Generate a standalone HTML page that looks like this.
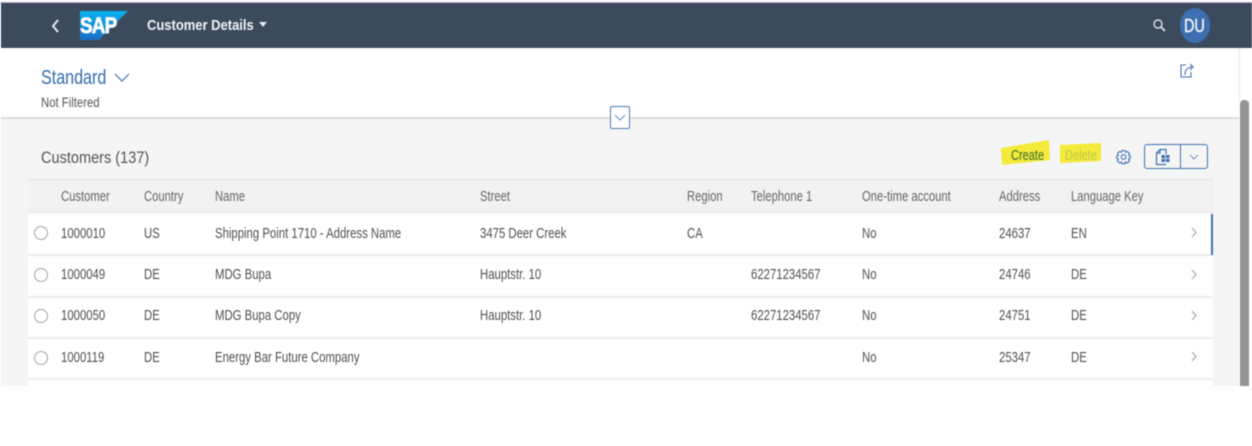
<!DOCTYPE html>
<html>
<head>
<meta charset="utf-8">
<style>
html,body{margin:0;padding:0;background:#fff;}
#p{position:relative;width:1252px;height:446px;overflow:hidden;background:#fff;font-family:"Liberation Sans",sans-serif;color:#4a4a4a;filter:blur(.45px);}
.a{position:absolute;}
.t{position:absolute;white-space:nowrap;font-size:14.5px;line-height:16px;transform:scaleX(.783);transform-origin:0 50%;color:#505050;}
.h{color:#666;transform:scaleX(.775);}
.sep{position:absolute;left:28px;width:1185px;height:2px;background:#ebebeb;}
.r{position:absolute;left:34px;width:12px;height:12px;border:1.3px solid #a3a3a3;border-radius:50%;background:#fff;}
svg{position:absolute;overflow:visible;}
</style>
</head>
<body>
<div id="p">
<div class="a" style="left:0;top:2px;width:1252px;height:1px;background:#b9a3c4"></div>
<div class="a" style="left:1px;top:3px;width:1251px;height:45px;background:#3c4a5e"></div>
<svg style="left:0;top:0" width="100" height="48"><path d="M58 20 L53 26 L58 32" fill="none" stroke="#e6e9ee" stroke-width="2"/>
<defs><linearGradient id="g" x1="0" y1="0" x2="0" y2="1"><stop offset="0" stop-color="#0ab4ef"/><stop offset="1" stop-color="#1a6fc4"/></linearGradient></defs>
<polygon points="80,11 128,11 99,40 80,40" fill="url(#g)"/></svg>
<div class="t" style="left:80px;top:14px;font-size:22px;line-height:24px;font-weight:bold;color:#fff;transform:scaleX(.86);letter-spacing:-1px;-webkit-text-stroke:.7px #fff">SAP</div>
<div class="t" style="left:147px;top:18px;font-size:15px;font-weight:bold;color:#f2f4f6;transform:scaleX(.865)">Customer Details</div>
<svg style="left:0;top:0" width="300" height="48"><polygon points="259,22 267,22 263,27" fill="#e6e9ee"/></svg>
<svg style="left:0;top:0" width="1252" height="48"><circle cx="1158" cy="24" r="4" fill="none" stroke="#dfe3e8" stroke-width="1.4"/><path d="M1161 27 L1165 31" stroke="#dfe3e8" stroke-width="1.8"/></svg>
<div class="a" style="left:1180px;top:8px;width:30px;height:35px;border-radius:50%;background:#3d6fb0"></div>
<div class="t" style="left:1184px;top:16px;font-size:18px;line-height:20px;color:#eef2f7;transform:scaleX(.8);-webkit-text-stroke:.5px #eef2f7">DU</div>

<div class="a" style="left:1239px;top:48px;width:1px;height:52px;background:#e5e5e5"></div>
<div class="t" style="left:41px;top:67px;font-size:20.5px;line-height:22px;color:#346bac;transform:scaleX(.785)">Standard</div>
<svg style="left:0;top:0" width="140" height="90"><path d="M115 74 L122 81 L129 74" fill="none" stroke="#3f72b0" stroke-width="1.2"/></svg>
<div class="t" style="left:41px;top:94px;font-size:14px;color:#555;transform:scaleX(.81)">Not Filtered</div>
<svg style="left:0;top:0" width="1252" height="90"><path d="M1186 65 H1181 V77 H1191 V72" fill="none" stroke="#3f72b0" stroke-width="1.1"/><path d="M1185 75 C1185 69 1188 67 1193 67 M1190 64 L1193 67 L1190 70" fill="none" stroke="#3f72b0" stroke-width="1.1"/></svg>

<div class="a" style="left:1px;top:118px;width:1238px;height:268px;background:#f5f5f5"></div>
<div class="a" style="left:1px;top:117px;width:1238px;height:2px;background:#dcdcdc"></div>
<div class="a" style="left:610px;top:106px;width:18px;height:21px;border:1px solid #4a7ab8;border-radius:2px;background:#fff"></div>
<svg style="left:0;top:0" width="640" height="130"><path d="M615 115 L620 120 L625 115" fill="none" stroke="#7d9dc6" stroke-width="1.2"/></svg>

<div class="a" style="left:1240px;top:100px;width:9px;height:286px;background:#949494;border-radius:4px 4px 0 0"></div>

<div class="t" style="left:41px;top:149px;font-size:17px;line-height:18px;color:#555;transform:scaleX(.855)">Customers (137)</div>

<svg style="left:0;top:0" width="1252" height="180">
<polygon points="1001,148 1049,140 1050,160 1002,165" fill="#f4ea3a"/>
<polygon points="1060,145 1101,143 1101,161 1060,163" fill="#f4ea3a"/>
<g fill="none" stroke="#3f72b0" stroke-width="1.1" stroke-linejoin="round"><circle cx="1123.500" cy="157" r="2.300"/><path d="M1122 150.500 H1125 L1125.500 152.300 L1127.500 151.500 L1129.500 153.500 L1128.500 155.500 L1130.300 156 V158.500 L1128.500 159 L1129.500 161 L1127.500 163 L1125.500 162 L1125 163.800 H1122 L1121.500 162 L1119.500 163 L1117.500 161 L1118.500 159 L1116.700 158.500 V156 L1118.500 155.500 L1117.500 153.500 L1119.500 151.500 L1121.500 152.300 Z"/></g>
<g fill="none" stroke="#3f72b0" stroke-width="1.200"><path d="M1166 154 V149.500 H1160 L1156.500 153 V164.500 H1166"/><path d="M1160 149.500 V153 H1156.500"/></g>
<rect x="1161.500" y="155" width="8" height="7" fill="#3f72b0"/>
<path d="M1161.500 158.500 H1169.500 M1165.500 155 V162" stroke="#f5f5f5" stroke-width=".8"/>
<path d="M1190 155 L1194 159 L1198 155" fill="none" stroke="#6f93c0" stroke-width="1"/>
</svg>
<div class="t" style="left:1011px;top:148px;color:#356a2c;transform:scaleX(.76)">Create</div>
<div class="t" style="left:1065px;top:148px;color:#bcc94a;transform:scaleX(.76)">Delete</div>
<div class="a" style="left:1144px;top:144px;width:62px;height:23px;border:1px solid #3f72b0;border-radius:3px"></div>
<div class="a" style="left:1180px;top:144px;width:1px;height:25px;background:#3f72b0"></div>

<div class="a" style="left:28px;top:179px;width:1185px;height:1px;background:#e2e2e2"></div>
<div class="a" style="left:28px;top:180px;width:1185px;height:32px;background:#f2f2f2"></div>
<div class="a" style="left:28px;top:212px;width:1185px;height:174px;background:#fff"></div>
<div class="sep" style="top:212px;height:1px;background:#e2e2e2"></div>
<div class="sep" style="top:254px"></div>
<div class="sep" style="top:296px"></div>
<div class="sep" style="top:337px"></div>
<div class="sep" style="top:378px"></div>
<div class="a" style="left:1211px;top:214px;width:2px;height:41px;background:#3f72b0"></div>

<div class="t h" style="left:61px;top:189px">Customer</div>
<div class="t h" style="left:144px;top:189px">Country</div>
<div class="t h" style="left:214.500px;top:189px">Name</div>
<div class="t h" style="left:480px;top:189px">Street</div>
<div class="t h" style="left:687px;top:189px">Region</div>
<div class="t h" style="left:751px;top:189px">Telephone 1</div>
<div class="t h" style="left:862px;top:189px">One-time account</div>
<div class="t h" style="left:999px;top:189px">Address</div>
<div class="t h" style="left:1071px;top:189px">Language Key</div>

<div class="r" style="top:226px"></div>
<div class="t" style="left:61px;top:225.500px">1000010</div>
<div class="t" style="left:144px;top:225.500px">US</div>
<div class="t" style="left:214.500px;top:225.500px">Shipping Point 1710 - Address Name</div>
<div class="t" style="left:480px;top:225.500px">3475 Deer Creek</div>
<div class="t" style="left:687px;top:225.500px">CA</div>
<div class="t" style="left:862px;top:225.500px">No</div>
<div class="t" style="left:999px;top:225.500px">24637</div>
<div class="t" style="left:1071px;top:225.500px">EN</div>

<div class="r" style="top:268px"></div>
<div class="t" style="left:61px;top:267px">1000049</div>
<div class="t" style="left:144px;top:267px">DE</div>
<div class="t" style="left:214.500px;top:267px">MDG Bupa</div>
<div class="t" style="left:480px;top:267px">Hauptstr. 10</div>
<div class="t" style="left:751px;top:267px">62271234567</div>
<div class="t" style="left:862px;top:267px">No</div>
<div class="t" style="left:999px;top:267px">24746</div>
<div class="t" style="left:1071px;top:267px">DE</div>

<div class="r" style="top:309px"></div>
<div class="t" style="left:61px;top:308px">1000050</div>
<div class="t" style="left:144px;top:308px">DE</div>
<div class="t" style="left:214.500px;top:308px">MDG Bupa Copy</div>
<div class="t" style="left:480px;top:308px">Hauptstr. 10</div>
<div class="t" style="left:751px;top:308px">62271234567</div>
<div class="t" style="left:862px;top:308px">No</div>
<div class="t" style="left:999px;top:308px">24751</div>
<div class="t" style="left:1071px;top:308px">DE</div>

<div class="r" style="top:351px"></div>
<div class="t" style="left:61px;top:349.500px">1000119</div>
<div class="t" style="left:144px;top:349.500px">DE</div>
<div class="t" style="left:214.500px;top:349.500px">Energy Bar Future Company</div>
<div class="t" style="left:862px;top:349.500px">No</div>
<div class="t" style="left:999px;top:349.500px">25347</div>
<div class="t" style="left:1071px;top:349.500px">DE</div>

<svg style="left:0;top:0" width="1252" height="386"><g fill="none" stroke="#a8a8a8" stroke-width="1.200"><path d="M1192 228 L1196 232.500 L1192 237"/><path d="M1192 270 L1196 274.500 L1192 279"/><path d="M1192 311 L1196 315.500 L1192 320"/><path d="M1192 352 L1196 356.500 L1192 361"/></g></svg>
</div>
</body>
</html>
